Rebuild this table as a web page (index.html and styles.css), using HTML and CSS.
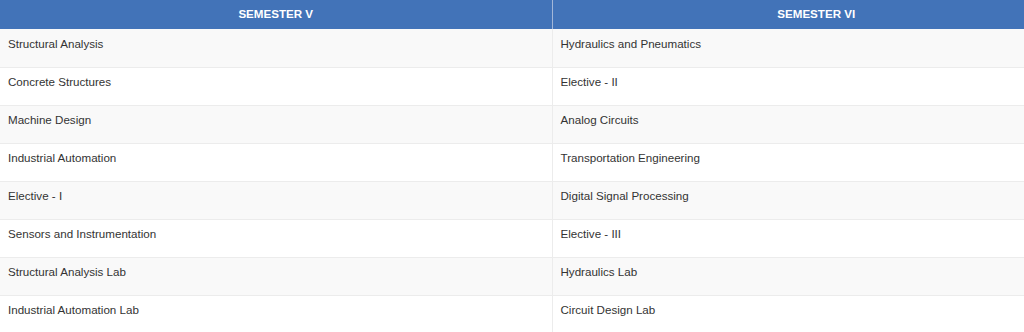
FILE: index.html
```html
<!DOCTYPE html>
<html lang="en">
<head>
<meta charset="utf-8">
<title>Semesters</title>
<link rel="stylesheet" href="styles.css">
</head>
<body>
<table class="sem-table">
  <colgroup>
    <col class="col-a">
    <col class="col-b">
  </colgroup>
  <thead>
    <tr><th>SEMESTER V</th><th class="th-b">SEMESTER VI</th></tr>
  </thead>
  <tbody>
    <tr><td>Structural Analysis</td><td>Hydraulics and Pneumatics</td></tr>
    <tr><td>Concrete Structures</td><td>Elective - II</td></tr>
    <tr><td>Machine Design</td><td>Analog Circuits</td></tr>
    <tr><td>Industrial Automation</td><td>Transportation Engineering</td></tr>
    <tr><td>Elective - I</td><td>Digital Signal Processing</td></tr>
    <tr><td>Sensors and Instrumentation</td><td>Elective - III</td></tr>
    <tr><td>Structural Analysis Lab</td><td>Hydraulics Lab</td></tr>
    <tr><td>Industrial Automation Lab</td><td>Circuit Design Lab</td></tr>
  </tbody>
</table>
</body>
</html>
```

FILE: styles.css
```css
html, body {
  margin: 0;
  padding: 0;
  overflow: hidden;
  background: #fff;
}
.sem-table {
  width: 100%;
  border-collapse: collapse;
  table-layout: fixed;
  font-family: "Liberation Sans", Arial, sans-serif;
  font-size: 11.6px;
  line-height: 17px;
  color: #333;
}
.col-a { width: 552px; }
.sem-table th {
  background: #4273b8;
  color: #fff;
  font-weight: bold;
  text-align: center;
  padding: 5px 8px 7px;
  border-left: 1px solid #a3b7d8;
}
.sem-table th:first-child { border-left: none; }
.sem-table .th-b { padding-left: 64px; }
.sem-table td {
  text-align: left;
  vertical-align: top;
  padding: 5px 8px 15px;
  border-top: 1px solid #ececec;
  border-left: 1px solid #ececec;
}
.sem-table td:first-child { border-left: none; }
.sem-table tbody tr:first-child td { border-top: none; padding-top: 6px; }
.sem-table tbody tr:nth-child(odd) td { background: #f9f9f9; }
.sem-table tbody tr:nth-child(even) td { background: #fff; }
```
